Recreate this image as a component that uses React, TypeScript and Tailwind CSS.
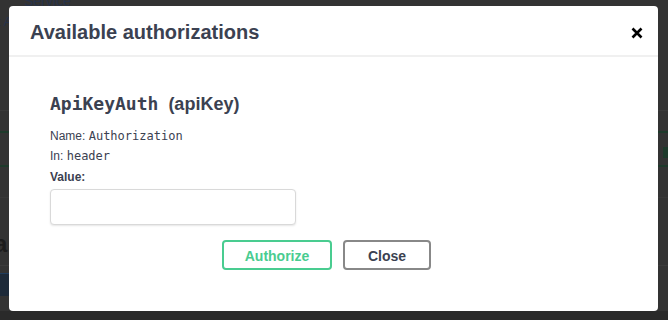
import React from "react";

const sans = { fontFamily: '"Liberation Sans", Arial, sans-serif' };
const mono = { fontFamily: '"DejaVu Sans Mono", monospace' };

export default function App() {
  return (
    <div
      className="relative w-[668px] h-[320px] overflow-hidden bg-[#333333]"
      style={sans}
    >
      {/* faint page content under the overlay */}
      <div className="absolute left-[24px] top-[-9px] text-[14px] text-[#26324a]">Service</div>
      <div className="absolute left-[-3px] top-[12px] text-[13px] text-[#26324a]">t A</div>
      <div className="absolute left-0 right-0 top-[110px] h-px bg-[#3a3a3a]" />
      <div className="absolute left-[-6px] top-[226px] text-[24px] font-bold text-[#1c1c1c]">a</div>
      <div className="absolute left-0 right-0 top-[265px] h-px bg-[#3b3b3b]" />
      <div className="absolute left-0 w-[40px] top-[273px] h-[23px] bg-[#1d2a39] border-t border-[#1f3c5c]" />
      <div className="absolute left-0 right-0 top-[131px] h-[2px] bg-[#1e3a2b]" />
      <div className="absolute right-0 w-[5px] top-[147px] h-[11px] bg-[#1e3a2b]" />
      <div className="absolute left-0 right-0 top-[165px] h-[2px] bg-[#1e3a2b]" />
      <div className="absolute left-0 right-0 top-[197px] h-px bg-[#383838]" />
      <div className="absolute left-0 right-0 top-[311px] h-[9px] bg-[#2a2a2a]" />

      {/* modal */}
      <div className="absolute left-[9px] top-[6px] w-[649px] h-[305px] bg-white rounded-[4px] flex flex-col">
        <div className="flex items-center justify-between pt-[15px] pb-[11px] pl-[21px] pr-[15px] border-b-2 border-[#f0f0f0]">
          <h3 className="text-[20px] leading-[23px] font-bold text-[#3b4151] m-0">
            Available authorizations
          </h3>
          <svg width="12" height="12" viewBox="0 0 12 12" className="mt-[1px]">
            <path d="M1.5 1.5 L10.5 10.5 M10.5 1.5 L1.5 10.5" stroke="#000" strokeWidth="2.6" strokeLinecap="butt" />
          </svg>
        </div>

        <div className="flex flex-col pl-[41px] pt-[36px] text-[#3b4151]">
          <h4 className="text-[18px] leading-[22px] font-bold m-0 flex items-baseline">
            <code style={mono}>ApiKeyAuth</code>
            <span className="ml-[10px]" style={sans}>(apiKey)</span>
          </h4>
          <p className="mt-[11px] text-[12px] leading-[20px]">
            Name: <code style={mono}>Authorization</code>
          </p>
          <p className="text-[12px] leading-[20px]">
            In: <code style={mono}>header</code>
          </p>
          <label className="mt-[1px] text-[12px] leading-[20px] font-bold">Value:</label>
          <input
            type="text"
            className="mt-[2px] w-[246px] h-[36px] border border-[#d9d9d9] rounded-[4px] shadow-[0_1px_2px_rgba(0,0,0,0.1)] outline-none bg-white"
          />
        </div>

        <div className="flex justify-center gap-[11px] pr-[14px] mt-[15px]">
          <button className="w-[110px] h-[30px] pt-[2px] border-2 border-[#49cc90] rounded-[4px] text-[14px] font-bold text-[#49cc90] bg-white" style={sans}>
            Authorize
          </button>
          <button className="w-[88px] h-[30px] pt-[2px] border-2 border-[#888888] rounded-[4px] text-[14px] font-bold text-[#3b4151] bg-white" style={sans}>
            Close
          </button>
        </div>
      </div>
    </div>
  );
}
